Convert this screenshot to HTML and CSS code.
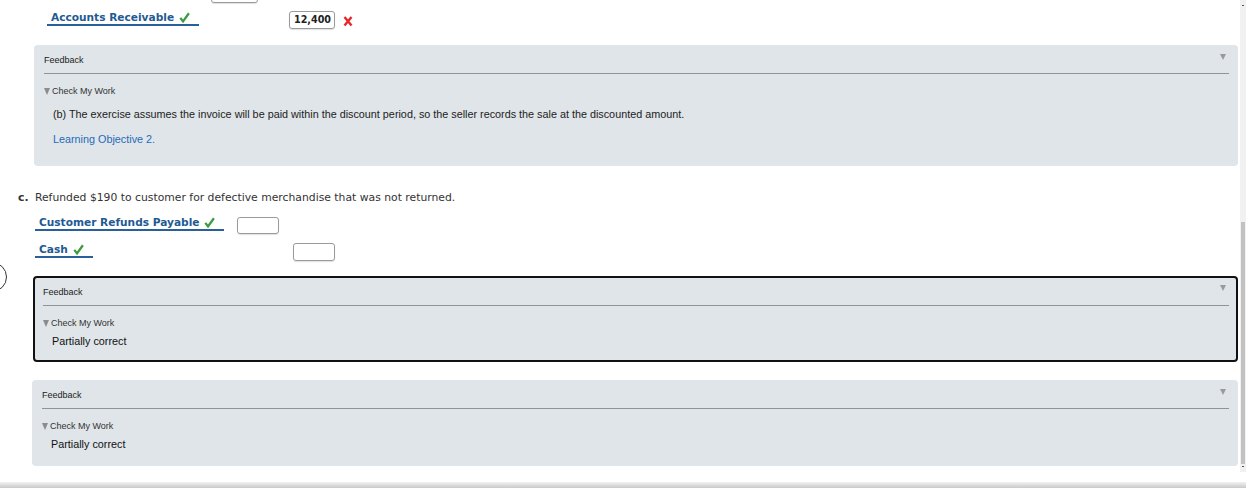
FILE: index.html
```html
<!DOCTYPE html>
<html lang="en">

<head>
    <meta charset="UTF-8">
    <meta name="viewport" content="width=device-width, initial-scale=1.0">
    <title>Check My Work</title>
    <link rel="stylesheet" href="styles.css">
</head>

<body>
    <div class="screen">
        <div class="page">
            <div class="content">
                <span class="ring"></span>

                <!-- tail of part b -->
                <div class="entry entryB stubRow">
                    <div></div>
                    <span class="field stub"></span>
                </div>
                <div class="entry entryB">
                    <div class="account">
                        <span>Accounts Receivable</span>
                        <svg class="tick" viewBox="0 0 12 12"><path d="M1.4 6.4 L4.4 10.2 L10.8 1.4" /></svg>
                    </div>
                    <div></div>
                    <div class="cell">
                        <span class="field">12,400</span>
                        <svg class="cross" viewBox="0 0 10 12"><path d="M1.5 2 L8.5 10.5 M8.5 2 L1.5 10.5" /></svg>
                    </div>
                </div>

                <div class="feedback first">
                    <div class="fbHead">Feedback<span class="caret"></span></div>
                    <div class="fbBody">
                        <div class="cmw"><span class="tri"></span>Check My Work</div>
                        <p class="explain">(b) The exercise assumes the invoice will be paid within the discount period, so the seller records the sale at the discounted amount.</p>
                        <p class="objective">Learning Objective 2.</p>
                    </div>
                </div>

                <!-- part c -->
                <p class="question"><b>c.</b> Refunded $190 to customer for defective merchandise that was not returned.</p>
                <div class="entry entryC">
                    <div class="account">
                        <span>Customer Refunds Payable</span>
                        <svg class="tick" viewBox="0 0 12 12"><path d="M1.4 6.4 L4.4 10.2 L10.8 1.4" /></svg>
                    </div>
                    <div class="cell"><span class="field debit"></span></div>
                </div>
                <div class="entry entryC second">
                    <div class="account">
                        <span>Cash</span>
                        <svg class="tick" viewBox="0 0 12 12"><path d="M1.4 6.4 L4.4 10.2 L10.8 1.4" /></svg>
                    </div>
                    <div></div>
                    <div class="cell"><span class="field"></span></div>
                </div>

                <div class="feedback focused">
                    <div class="fbHead">Feedback<span class="caret"></span></div>
                    <div class="fbBody">
                        <div class="cmw"><span class="tri"></span>Check My Work</div>
                        <p class="result">Partially correct</p>
                    </div>
                </div>

                <div class="feedback last">
                    <div class="fbHead">Feedback<span class="caret"></span></div>
                    <div class="fbBody">
                        <div class="cmw"><span class="tri"></span>Check My Work</div>
                        <p class="result">Partially correct</p>
                    </div>
                </div>
            </div>
            <div class="scrollbar">
                <span class="arrow up"></span>
                <div class="thumb"></div>
                <span class="arrow down"></span>
            </div>
        </div>
        <div class="shadowBar"></div>
    </div>
</body>

</html>
```

FILE: styles.css
```css
body {
    margin: 0;
    background-color: #fff;
}

.screen {
    width: 1246px;
    height: 494px;
    overflow: hidden;
}

.page {
    display: flex;
    height: 482px;
}

.content {
    position: relative;
    flex: 1;
    overflow: hidden;
}

/* 左侧露出的一截圆圈 */
.ring {
    position: absolute;
    left: -23px;
    top: 262px;
    width: 28px;
    height: 28px;
    border: 1.5px solid #333;
    border-radius: 50%;
}

/* ------------------------分录行-------------------------- */
.entry {
    display: grid;
    align-items: start;
    height: 20px;
}

.entryB {
    padding-left: 47px;
    grid-template-columns: 164px 78px auto;
    margin-top: 7px;
}

.stubRow {
    height: 3px;
    margin-top: 0;
}

.entryC {
    padding-left: 35px;
    grid-template-columns: 202px 56px auto;
    margin-top: 10px;
}

.entryC.second {
    margin-top: 7px;
}

.account {
    display: inline-flex;
    align-items: center;
    justify-self: start;
    gap: 5px;
    height: 14px;
    padding: 0 9px 0 4px;
    border-bottom: 2px solid #2a6099;
    font-family: "DejaVu Sans", Verdana, sans-serif;
    font-size: 10.6px;
    font-weight: bold;
    color: #1f5a93;
}

.tick {
    width: 11px;
    height: 11px;
    fill: none;
    stroke: #3d9b3f;
    stroke-width: 2.5;
}

.cell {
    display: flex;
    align-items: center;
    gap: 8px;
}

.field {
    display: inline-block;
    box-sizing: border-box;
    width: 46px;
    height: 18px;
    margin-top: 1px;
    padding: 0 4px;
    border: 1px solid #9a9a9a;
    border-radius: 3px;
    box-shadow: 0 1px 1px rgba(0, 0, 0, 0.12);
    font-family: "DejaVu Sans", Verdana, sans-serif;
    font-size: 9.6px;
    font-weight: bold;
    line-height: 16px;
    text-align: right;
    color: #222;
}

.entryC .field {
    width: 42px;
}

.field.debit {
    margin-top: 2px;
    height: 17px;
}

.stub {
    width: 47px;
    margin-top: -15px;
}

.cross {
    width: 10px;
    height: 12px;
    margin-top: 2px;
    fill: none;
    stroke: #e8262b;
    stroke-width: 2.4;
}

.question {
    margin: 25px 0 0 18px;
    font-family: "DejaVu Sans", Verdana, sans-serif;
    font-size: 10.8px;
    line-height: 14px;
    color: #333;
}

.question b {
    margin-right: 3px;
}

/* ------------------------反馈框-------------------------- */
.feedback {
    width: 1201px;
    margin-left: 33px;
    border: 2px solid transparent;
    border-radius: 4px;
    background-color: #dfe5e8;
    font-family: "Liberation Sans", Arial, sans-serif;
}

.feedback.first {
    width: 1200px;
    margin-top: 15px;
    margin-left: 34px;
}

.feedback.focused {
    margin-top: 14px;
    border-color: #111;
}

.feedback.last {
    width: 1202px;
    margin-top: 18px;
    margin-left: 32px;
}

.fbHead {
    position: relative;
    display: flex;
    align-items: center;
    height: 26px;
    margin: 0 7px 0 8px;
    border-bottom: 1px solid #8d9397;
    font-size: 9px;
    color: #222;
}

.focused .fbHead {
    height: 27px;
}

.caret {
    position: absolute;
    right: 3px;
    top: 7px;
    border-left: 3.5px solid transparent;
    border-right: 3.5px solid transparent;
    border-top: 6px solid #9a9a9a;
}

.fbBody {
    padding: 10px 7px 12px 8px;
}

.focused .fbBody {
    padding-bottom: 11px;
}

.first .fbBody {
    padding-bottom: 17px;
}

.cmw {
    display: flex;
    align-items: center;
    height: 14px;
    font-size: 9px;
    color: #333;
}

.tri {
    margin-right: 2px;
    border-left: 3.5px solid transparent;
    border-right: 3.5px solid transparent;
    border-top: 7px solid #8c8c8c;
}

.explain,
.objective,
.result {
    margin: 0;
    padding-left: 9px;
    font-size: 10.8px;
    line-height: 16px;
}

.explain {
    margin-top: 8px;
    color: #222;
}

.objective {
    margin-top: 9px;
    color: #1f6bb8;
}

.result {
    margin-top: 3px;
    color: #111;
}

/* ------------------------右侧滚动条-------------------------- */
.scrollbar {
    position: relative;
    width: 6px;
    height: 472px;
    background-color: #f1f1f1;
}

.thumb {
    margin: 222px 1px 0;
    height: 242px;
    background-color: #c1c1c1;
}

.arrow {
    position: absolute;
    left: 2px;
    width: 2px;
    height: 1px;
    background-color: #555;
}

.arrow.up {
    top: 5px;
}

.arrow.down {
    top: 466px;
}

.shadowBar {
    height: 6px;
    background: linear-gradient(#f2f2f2, #c9c9c9);
}
```
